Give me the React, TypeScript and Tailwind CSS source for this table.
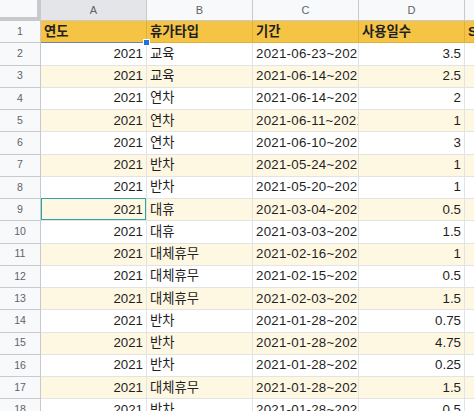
import React from "react";

const rows: [string, string, string, string][] = [
  ["2021", "교육", "2021-06-23~2021-06-25", "3.5"],
  ["2021", "교육", "2021-06-14~2021-06-16", "2.5"],
  ["2021", "연차", "2021-06-14~2021-06-15", "2"],
  ["2021", "연차", "2021-06-11~2021-06-11", "1"],
  ["2021", "연차", "2021-06-10~2021-06-14", "3"],
  ["2021", "반차", "2021-05-24~2021-05-24", "1"],
  ["2021", "반차", "2021-05-20~2021-05-20", "1"],
  ["2021", "대휴", "2021-03-04~2021-03-04", "0.5"],
  ["2021", "대휴", "2021-03-03~2021-03-04", "1.5"],
  ["2021", "대체휴무", "2021-02-16~2021-02-16", "1"],
  ["2021", "대체휴무", "2021-02-15~2021-02-15", "0.5"],
  ["2021", "대체휴무", "2021-02-03~2021-02-04", "1.5"],
  ["2021", "반차", "2021-01-28~2021-01-28", "0.75"],
  ["2021", "반차", "2021-01-28~2021-02-03", "4.75"],
  ["2021", "반차", "2021-01-28~2021-01-28", "0.25"],
  ["2021", "대체휴무", "2021-01-28~2021-01-29", "1.5"],
  ["2021", "반차", "2021-01-28~2021-01-28", "0.5"],
];

const font = { fontFamily: '"Liberation Sans", Arial, "Noto Sans CJK KR", sans-serif' };

export default function App() {
  return (
    <div className="w-[474px] h-[411px] overflow-hidden bg-white text-[#1f1f1f]" style={font}>
      <div className="w-[520px]">
        {/* Column header */}
        <div className="grid grid-cols-[41px_106px_106px_106px_106px_55px] h-[21px] text-[11px] text-[#5f6368]">
          <div className="bg-[#f8f9fa] border-r-[4px] border-b-[4px] border-[#c7c9cc]" />
          <div className="bg-[#e3e5e8] border-r border-b border-[#c7c9cc] flex items-center justify-center">A</div>
          <div className="bg-[#f8f9fa] border-r border-b border-[#c7c9cc] flex items-center justify-center">B</div>
          <div className="bg-[#f8f9fa] border-r border-b border-[#c7c9cc] flex items-center justify-center">C</div>
          <div className="bg-[#f8f9fa] border-r border-b border-[#c7c9cc] flex items-center justify-center">D</div>
          <div className="bg-[#f8f9fa] border-b border-[#c7c9cc] flex items-center justify-center">E</div>
        </div>
        {/* Row 1 */}
        <div className="grid grid-cols-[41px_106px_106px_106px_106px_55px] h-[22.25px] text-[13.3px] font-bold">
          <div className="bg-[#f8f9fa] border-r border-b border-[#c7c9cc] flex items-center justify-center text-[10.5px] font-normal text-[#5f6368]">1</div>
          <div className="relative bg-[#f6c445] border-r border-b border-r-[#e0b03c] border-b-[#6f86a6] flex items-center px-[3px]">
            연도
            <div className="absolute right-[-4px] bottom-[-4px] w-[7px] h-[7px] bg-[#1a73e8] border border-white z-10" />
          </div>
          <div className="bg-[#f6c445] border-r border-b border-[#e0b03c] flex items-center px-[3px]">휴가타입</div>
          <div className="bg-[#f6c445] border-r border-b border-[#e0b03c] flex items-center px-[3px]">기간</div>
          <div className="bg-[#f6c445] border-r border-b border-[#e0b03c] flex items-center px-[3px]">사용일수</div>
          <div className="bg-[#f6c445] border-b border-[#e0b03c] flex items-center px-[3px]">Status</div>
        </div>
        {rows.map((r, i) => {
          const n = i + 2;
          const bg = n % 2 === 0 ? "bg-white" : "bg-[#fef8e3]";
          const selected = n === 9;
          return (
            <div key={n} className="grid grid-cols-[41px_106px_106px_106px_106px_55px] h-[22.25px] text-[13.3px]">
              <div className="bg-[#f8f9fa] border-r border-b border-[#c7c9cc] flex items-center justify-center text-[10.5px] text-[#5f6368]">{n}</div>
              <div className={`relative ${bg} border-r border-b border-[#e2e3e3] flex items-center justify-end px-[3px]`}>
                {r[0]}
                {selected && <div className="absolute inset-0 border-[1.5px] border-[#31a3a6] -mt-px" />}
              </div>
              <div className={`${bg} border-r border-b border-[#e2e3e3] flex items-center px-[3px] overflow-hidden whitespace-nowrap`}>{r[1]}</div>
              <div className={`${bg} border-r border-b border-[#e2e3e3] flex items-center px-[3px] overflow-hidden whitespace-nowrap tracking-[0.25px]`}>{r[2]}</div>
              <div className={`${bg} border-r border-b border-[#e2e3e3] flex items-center justify-end px-[3px]`}>{r[3]}</div>
              <div className={`${bg} border-b border-[#e2e3e3]`} />
            </div>
          );
        })}
      </div>
    </div>
  );
}
